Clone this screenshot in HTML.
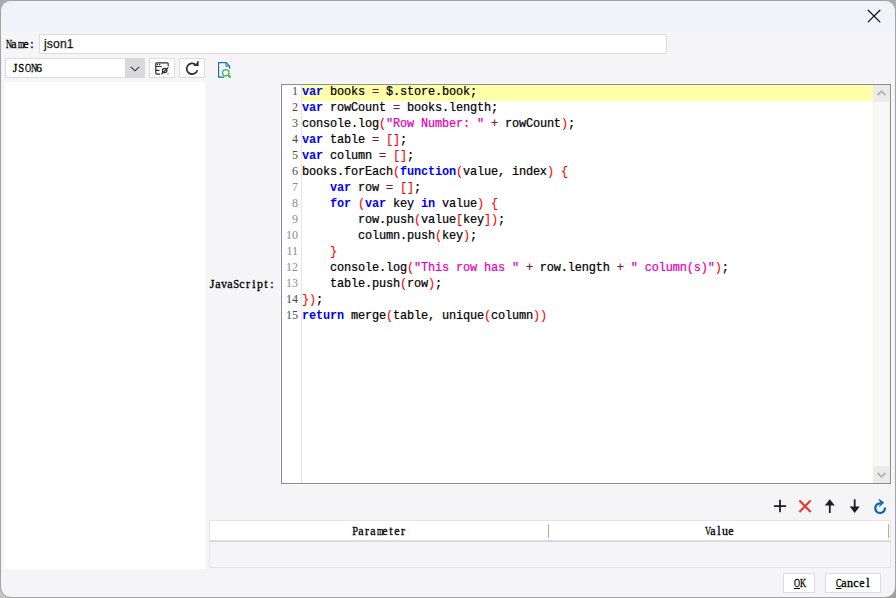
<!DOCTYPE html>
<html><head><meta charset="utf-8"><title>json1</title>
<style>
*{box-sizing:border-box;margin:0;padding:0}
html,body{width:896px;height:598px;overflow:hidden;background:#ababab}
body{font-family:"Liberation Sans",sans-serif;position:relative}
#win{position:absolute;left:0;top:0;width:896px;height:598px;border:1px solid #a2a2a2;border-radius:11px;background:#f5f5f7;overflow:hidden}
#title{position:absolute;left:0;top:0;width:894px;height:31px;background:#f1f3f9}
.abs{position:absolute}
i.c{display:inline-block;width:6px;text-align:center;font-style:normal;font-family:"Liberation Serif",serif;font-size:12px;line-height:14px;color:#000;-webkit-text-stroke:0.3px #000;white-space:pre;overflow:visible}
i.w{transform:scaleX(.68)}
i.k{transform:scaleX(.7)}
i.p{transform:scaleX(.88)}
i.u{text-decoration:underline}
.lab{position:absolute;white-space:nowrap;height:14px;line-height:14px;font-size:0}
.box{position:absolute;background:#fff;border:1px solid #dcdcde}
#name{left:38px;top:33px;width:628px;height:20px}
#name span{position:absolute;left:4px;top:2px;font-size:12.2px;line-height:14px;color:#161616;letter-spacing:.1px;-webkit-text-stroke:.25px #161616}
#combo{left:4px;top:57px;width:140px;height:20px}
#combo .arr{position:absolute;right:-1px;top:-1px;width:20px;height:20px;background:#d9d9dc}
#b1{left:148px;top:57px;width:26px;height:20px}
#b2{left:178px;top:57px;width:26px;height:20px}
#left{position:absolute;left:4px;top:81px;width:200px;height:487px;background:#fff}
#ed{position:absolute;left:280px;top:83px;width:610px;height:400px;border:1px solid #8c8c8c;background:#fff;overflow:hidden;box-shadow:0 0 0 1px #fafafc}
#ed .gut{position:absolute;left:19px;top:0;width:1px;height:398px;background:#e6e6e6}
.row{position:relative;height:16px;white-space:pre}
.row.hl .tx{background:#ffffaa}
.ln{position:absolute;left:0;top:0;width:16px;height:16px;text-align:right;font-family:"Liberation Serif",serif;font-size:12px;line-height:12px;color:#4a4a4a}
.ln.g{color:#8c8c8c}
.tx{position:absolute;left:20px;top:0;width:571px;height:16px;padding-top:0;font-family:"Liberation Mono",monospace;font-size:11.9px;letter-spacing:-0.14px;line-height:14px;color:#000;white-space:pre;-webkit-text-stroke:.22px currentColor}
.tx b{color:#0000ff;font-weight:bold;-webkit-text-stroke:0}
.tx s{color:#ff0000;text-decoration:none;-webkit-text-stroke:.1px #ff0000}
.tx q{color:#e600b4;quotes:none}
.tx q:before,.tx q:after{content:none}
.tx u{color:#7a1838;text-decoration:none}
#sb{position:absolute;right:0;top:0;width:17px;height:398px;background:#f9f9f8;border-left:1px solid #f4f3ec;border-right:1px solid #efeee3}
#sb .up,#sb .dn{position:absolute;left:-1px;width:17px;height:17px;background:#ebebea}
#sb .up{top:0} #sb .dn{bottom:0}
#tbl{position:absolute;left:208px;top:519px;width:682px;height:48px;border:1px solid #e4e4e6;background:#f5f5f7}
#tbl .hd{position:absolute;left:0;top:0;width:680px;height:19px;background:#fff}
#tbl .sh{position:absolute;left:0;top:19px;width:680px;height:2px;background:linear-gradient(#e2e2e2,#d2d2d2)}
#tbl .sep{position:absolute;top:3px;width:1px;height:14px;background:#b0ad9f}
.btn{position:absolute;background:#fff;border:1px solid #dcdcde;height:20px;top:572px}
svg{position:absolute;overflow:visible}
</style></head><body>
<div style="position:absolute;left:0;top:580px;width:20px;height:18px;background:#c4c4c4"></div><div style="position:absolute;left:876px;top:580px;width:20px;height:18px;background:#a0a0a0"></div>
<div id="win">
<div id="title"></div>

<div class="lab" style="left:4px;top:36px"><i class="c k">N</i><i class="c">a</i><i class="c w">m</i><i class="c">e</i><i class="c">:</i></div>
<div class="box" id="name"><span>json1</span></div>

<div class="box" id="combo"><div class="arr"></div>
<svg style="left:124px;top:7px" width="10" height="6" viewBox="0 0 10 6"><path d="M0.8 0.8 L5 4.8 L9.2 0.8" stroke="#333" stroke-width="1.1" fill="none"/></svg>
</div>
<div class="lab" style="left:11px;top:60px"><i class="c">J</i><i class="c p">S</i><i class="c k">O</i><i class="c k">N</i><i class="c">6</i></div>

<div class="box" id="b1"></div>
<div class="box" id="b2"></div>

<div id="left"></div>
<div class="lab" style="left:208px;top:276px"><i class="c">J</i><i class="c">a</i><i class="c">v</i><i class="c">a</i><i class="c p">S</i><i class="c">c</i><i class="c">r</i><i class="c">i</i><i class="c">p</i><i class="c">t</i><i class="c">:</i></div>

<div id="ed">
<div class="gut"></div>
<div class="row hl"><span class="ln">1</span><span class="tx"><b>var</b> books <u>=</u> $.store.book;</span></div>
<div class="row"><span class="ln">2</span><span class="tx"><b>var</b> rowCount <u>=</u> books.length;</span></div>
<div class="row"><span class="ln">3</span><span class="tx">console.log<s>(</s><q>&quot;Row Number: &quot;</q> <u>+</u> rowCount<s>)</s>;</span></div>
<div class="row"><span class="ln">4</span><span class="tx"><b>var</b> table <u>=</u> <s>[]</s>;</span></div>
<div class="row"><span class="ln">5</span><span class="tx"><b>var</b> column <u>=</u> <s>[]</s>;</span></div>
<div class="row"><span class="ln">6</span><span class="tx">books.forEach<s>(</s><b>function</b><s>(</s>value, index<s>)</s> <s>{</s></span></div>
<div class="row"><span class="ln g">7</span><span class="tx">    <b>var</b> row <u>=</u> <s>[]</s>;</span></div>
<div class="row"><span class="ln g">8</span><span class="tx">    <b>for</b> <s>(</s><b>var</b> key <b>in</b> value<s>)</s> <s>{</s></span></div>
<div class="row"><span class="ln g">9</span><span class="tx">        row.push<s>(</s>value<s>[</s>key<s>])</s>;</span></div>
<div class="row"><span class="ln g">10</span><span class="tx">        column.push<s>(</s>key<s>)</s>;</span></div>
<div class="row"><span class="ln g">11</span><span class="tx">    <s>}</s></span></div>
<div class="row"><span class="ln g">12</span><span class="tx">    console.log<s>(</s><q>&quot;This row has &quot;</q> <u>+</u> row.length <u>+</u> <q>&quot; column(s)&quot;</q><s>)</s>;</span></div>
<div class="row"><span class="ln g">13</span><span class="tx">    table.push<s>(</s>row<s>)</s>;</span></div>
<div class="row"><span class="ln">14</span><span class="tx"><s>})</s>;</span></div>
<div class="row"><span class="ln">15</span><span class="tx"><b>return</b> merge<s>(</s>table, unique<s>(</s>column<s>))</s></span></div>

<div id="sb"><div class="up"><svg style="left:4px;top:5px" width="9" height="6" viewBox="0 0 9 6"><path d="M0.6 5 L4.5 1.2 L8.4 5" stroke="#b0b0b0" stroke-width="1.8" fill="none"/></svg></div>
<div class="dn"><svg style="left:4px;top:6px" width="9" height="6" viewBox="0 0 9 6"><path d="M0.6 1 L4.5 4.8 L8.4 1" stroke="#b0b0b0" stroke-width="1.8" fill="none"/></svg></div></div>
</div>

<svg id="ov" style="left:-1px;top:-1px" width="896" height="598" viewBox="0 0 896 598">
<!-- close -->
<path d="M868.2 10.2 L879.9 21.9 M879.9 10.2 L868.2 21.9" stroke="#111" stroke-width="1.25" fill="none" stroke-linecap="round"/>
<!-- icon1: window + plug -->
<g stroke="#2b2b2b" stroke-width="1.2" fill="none">
<path d="M160 74.1 H156.8 Q155.8 74.1 155.8 73.1 V63.8 Q155.8 62.8 156.8 62.8 H167.2 Q168.2 62.8 168.2 63.8 V66.3"/>
<path d="M155.8 66.5 H161.6 M155.8 70.3 H159.4"/>
<circle cx="164.7" cy="70.5" r="2.2"/>
<path d="M168.3 67.4 L161.3 74.3"/>
</g>
<circle cx="157.5" cy="64.6" r="0.75" fill="#2b2b2b"/><circle cx="159.6" cy="64.6" r="0.75" fill="#2b2b2b"/><circle cx="168" cy="73.8" r="0.6" fill="#2b2b2b"/>
<!-- icon2: refresh -->
<g stroke="#2b2b2b" fill="none">
<path d="M195.6 64.6 A5.4 5.4 0 1 0 197.3 70.1" stroke-width="1.7"/>
<path d="M197.8 61.3 V65.2 H193.8" stroke-width="1.7"/><path d="M197.4 62.6 V64.8 H195 Z" fill="#2b2b2b" stroke="none"/>
</g>
<!-- doc search -->
<g fill="none" stroke="#fff" stroke-opacity=".85" stroke-width="3" stroke-linejoin="round">
<path d="M224.2 77.2 H218.6 V62.6 H226 L229.6 66.2 V68.6"/><circle cx="225.8" cy="72.8" r="3.3"/><path d="M228.2 75.2 L230.3 77.2"/></g>
<g fill="none" stroke-width="1.2">
<path d="M224.2 77.2 H218.6 V62.6 H226 L229.6 66.2 V68.8" stroke="#1a66b3"/>
<path d="M226 62.8 V66.2 H229.4" stroke="#1a66b3" stroke-opacity=".8"/>
<circle cx="225.8" cy="72.8" r="3.2" stroke="#3cb54a" stroke-width="1.3"/>
<path d="M228.3 75.2 L230.2 77" stroke="#3cb54a" stroke-width="1.9" stroke-linecap="round"/>
</g>
<!-- toolbar -->
<path d="M780 499.8 V512.2 M773.9 506 H786.1" stroke="#1c1c1c" stroke-width="1.75" fill="none"/>
<path d="M799.4 500.6 L810.7 512 M810.7 500.6 L799.4 512" stroke="#e53935" stroke-width="2.1" fill="none"/>
<path d="M829.8 502 V512.9" stroke="#1f1f1f" stroke-width="1.8" fill="none"/><path d="M829.8 499.2 L834.8 505.6 H824.8 Z" fill="#1f1f1f"/>
<path d="M854.7 499.3 V510" stroke="#1f1f1f" stroke-width="1.8" fill="none"/><path d="M854.7 513 L859.7 506.6 H849.7 Z" fill="#1f1f1f"/>
<path d="M880.4 503.4 A4.8 4.8 0 1 0 884.8 507.5" stroke="#1262b3" stroke-width="2.2" fill="none"/>
<path d="M879.2 499.3 L883.7 502.7 L879.5 506.5 L880.8 503 Z" fill="#1262b3" stroke="#1262b3" stroke-width=".8" stroke-linejoin="round"/>
</svg>
<div id="tbl"><div class="hd"></div><div class="sh"></div>
<div class="sep" style="left:338px"></div><div class="sep" style="left:678px"></div>
</div>
<div class="lab" style="left:351px;top:523px"><i class="c p">P</i><i class="c">a</i><i class="c">r</i><i class="c">a</i><i class="c w">m</i><i class="c">e</i><i class="c">t</i><i class="c">e</i><i class="c">r</i></div>
<div class="lab" style="left:703px;top:523px"><i class="c k">V</i><i class="c">a</i><i class="c">l</i><i class="c">u</i><i class="c">e</i></div>

<div class="btn" style="left:782px;width:32px"></div>
<div class="lab" style="left:792px;top:575px"><i class="c k u">O</i><i class="c k">K</i></div>
<div class="btn" style="left:824px;width:56px"></div>
<div class="lab" style="left:834px;top:575px"><i class="c k u">C</i><i class="c">a</i><i class="c">n</i><i class="c">c</i><i class="c">e</i><i class="c">l</i></div>
</div>
</body></html>
